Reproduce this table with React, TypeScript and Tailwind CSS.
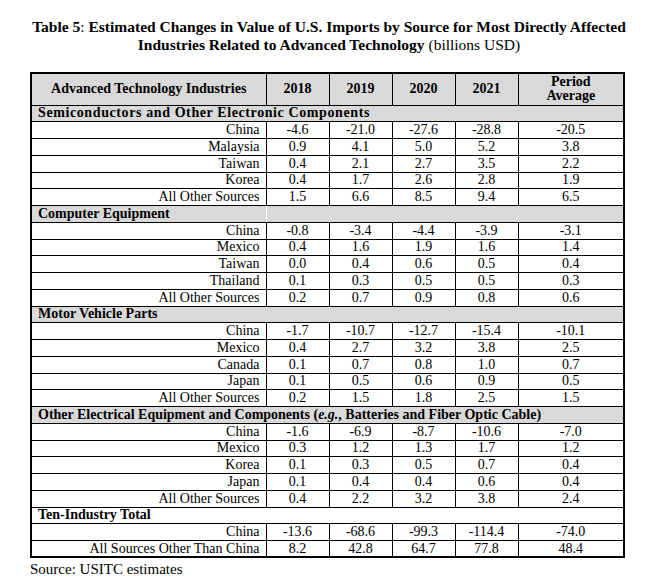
import type { ReactNode } from "react"

type Row = [string, string, string, string, string, string]

interface Section {
    title: ReactNode
    rows: Row[]
    shaded?: boolean
    split?: boolean
    wide?: boolean
}

const sections: Section[] = [
    {
        title: "Semiconductors and Other Electronic Components",
        shaded: true,
        wide: true,
        rows: [
            ["China", "-4.6", "-21.0", "-27.6", "-28.8", "-20.5"],
            ["Malaysia", "0.9", "4.1", "5.0", "5.2", "3.8"],
            ["Taiwan", "0.4", "2.1", "2.7", "3.5", "2.2"],
            ["Korea", "0.4", "1.7", "2.6", "2.8", "1.9"],
            ["All Other Sources", "1.5", "6.6", "8.5", "9.4", "6.5"],
        ],
    },
    {
        title: "Computer Equipment",
        shaded: true,
        split: true,
        rows: [
            ["China", "-0.8", "-3.4", "-4.4", "-3.9", "-3.1"],
            ["Mexico", "0.4", "1.6", "1.9", "1.6", "1.4"],
            ["Taiwan", "0.0", "0.4", "0.6", "0.5", "0.4"],
            ["Thailand", "0.1", "0.3", "0.5", "0.5", "0.3"],
            ["All Other Sources", "0.2", "0.7", "0.9", "0.8", "0.6"],
        ],
    },
    {
        title: "Motor Vehicle Parts",
        shaded: true,
        rows: [
            ["China", "-1.7", "-10.7", "-12.7", "-15.4", "-10.1"],
            ["Mexico", "0.4", "2.7", "3.2", "3.8", "2.5"],
            ["Canada", "0.1", "0.7", "0.8", "1.0", "0.7"],
            ["Japan", "0.1", "0.5", "0.6", "0.9", "0.5"],
            ["All Other Sources", "0.2", "1.5", "1.8", "2.5", "1.5"],
        ],
    },
    {
        title: (
            <>
                Other Electrical Equipment and Components (<i>e.g.</i>, Batteries and Fiber Optic Cable)
            </>
        ),
        shaded: true,
        rows: [
            ["China", "-1.6", "-6.9", "-8.7", "-10.6", "-7.0"],
            ["Mexico", "0.3", "1.2", "1.3", "1.7", "1.2"],
            ["Korea", "0.1", "0.3", "0.5", "0.7", "0.4"],
            ["Japan", "0.1", "0.4", "0.4", "0.6", "0.4"],
            ["All Other Sources", "0.4", "2.2", "3.2", "3.8", "2.4"],
        ],
    },
    {
        title: "Ten-Industry Total",
        rows: [
            ["China", "-13.6", "-68.6", "-99.3", "-114.4", "-74.0"],
            ["All Sources Other Than China", "8.2", "42.8", "64.7", "77.8", "48.4"],
        ],
    },
]

const cell = "border border-black p-0 leading-none"

function SectionRows({ section }: { section: Section }) {
    const bg = section.shaded ? "bg-[#d9d9d9]" : "bg-white"
    const track = section.wide ? "tracking-[0.6px]" : ""
    return (
        <>
            <tr className="h-[16.75px]">
                {section.split ? (
                    <>
                        <td className={`${cell} ${bg} border-r-white font-bold text-left pl-[6px] whitespace-nowrap`}>
                            {section.title}
                        </td>
                        <td colSpan={5} className={`${cell} ${bg} border-l-white`} />
                    </>
                ) : (
                    <td colSpan={6} className={`${cell} ${bg} ${track} font-bold text-left pl-[6px] whitespace-nowrap`}>
                        {section.title}
                    </td>
                )}
            </tr>
            {section.rows.map((row) => (
                <tr key={row[0]} className="h-[16.75px]">
                    <td className={`${cell} text-right pr-[6px]`}>{row[0]}</td>
                    {row.slice(1).map((v, i) => (
                        <td key={i} className={`${cell} text-center`}>
                            {v}
                        </td>
                    ))}
                </tr>
            ))}
        </>
    )
}

export default function App() {
    return (
        <div className="w-[658px] h-[586px] bg-white text-black font-['Liberation_Serif','Times_New_Roman',serif] pt-[18px]">
            <h1 className="text-center font-bold text-[15.5px] leading-[18px]">
                Table 5<span className="font-normal">:</span> Estimated Changes in Value of U.S. Imports by Source for Most Directly Affected
                <br />
                Industries Related to Advanced Technology <span className="font-normal">(billions USD)</span>
            </h1>

            <table className="mt-[18px] ml-[30px] w-[593px] table-fixed border-collapse border-2 border-black text-[14px]">
                <colgroup>
                    <col className="w-[235px]" />
                    <col className="w-[63px]" />
                    <col className="w-[63px]" />
                    <col className="w-[63px]" />
                    <col className="w-[63px]" />
                    <col className="w-[106px]" />
                </colgroup>
                <thead>
                    <tr className="h-[32px] bg-[#d9d9d9] font-bold">
                        <th className={cell}>Advanced Technology Industries</th>
                        <th className={cell}>2018</th>
                        <th className={cell}>2019</th>
                        <th className={cell}>2020</th>
                        <th className={cell}>2021</th>
                        <th className={`${cell} leading-[15px]`}>
                            Period
                            <br />
                            Average
                        </th>
                    </tr>
                </thead>
                <tbody>
                    {sections.map((s, i) => (
                        <SectionRows key={i} section={s} />
                    ))}
                </tbody>
            </table>

            <p className="ml-[30px] mt-[3px] text-[15px] leading-[16px]">Source: USITC estimates</p>
        </div>
    )
}
